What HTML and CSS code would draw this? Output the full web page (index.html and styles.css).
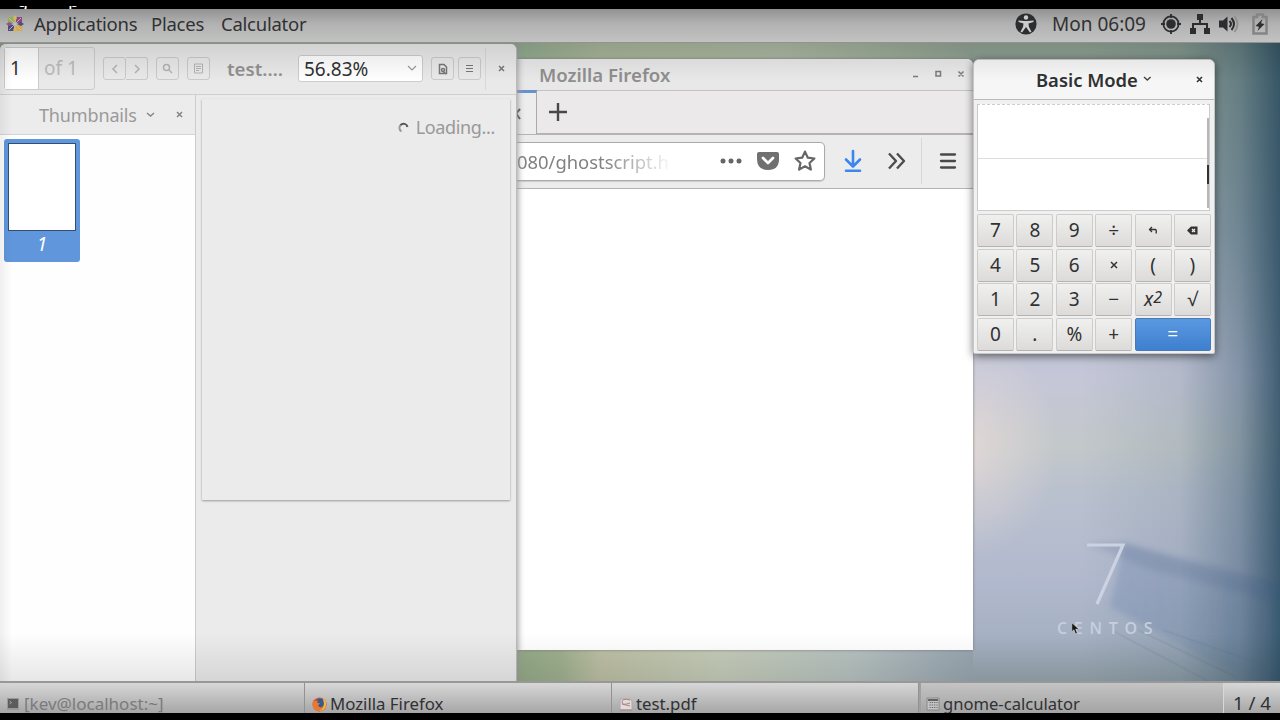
FILE: index.html
```
<!DOCTYPE html>
<html lang="en">
<head>
    <meta charset="utf-8">
    <title>CentOS 7 Desktop</title>
    <link rel="stylesheet" href="styles.css">
</head>
<body>
    <div class="caption"><span>g</span><span>p</span></div>
    <div class="panel">
        <svg class="logo" width="18" height="18" viewBox="0 0 18 18">
            <path d="M2 2h6v6H2z" fill="#94ae58"/><path d="M10 2h6v6h-6z" fill="#8b487f"/>
            <path d="M2 10h6v6H2z" fill="#504a7e"/><path d="M10 10h6v6h-6z" fill="#d4a748"/>
            <path d="M9 0l2 3-2 4-2-4zM9 18l-2-3 2-4 2 4z" fill="#d2b568"/>
            <path d="M0 9l3-2 4 2-4 2z" fill="#925684"/><path d="M18 9l-3 2-4-2 4-2z" fill="#514b80"/>
            <path d="M3 3l12 12M15 3L3 15" stroke="#c9c2c4" stroke-width=".8"/>
        </svg>
        <span class="menu apps">Applications</span>
        <span class="menu places">Places</span>
        <span class="menu calc-menu">Calculator</span>
        <svg class="access" width="22" height="22" viewBox="0 0 22 22">
            <circle cx="11" cy="11" r="10.6" fill="#2c2d2e"/><circle cx="11" cy="4.5" r="2.2" fill="#ccc"/>
            <path d="M3.5 7.4l6 .7h3l6-.7v1.7l-5 1.3.4 3.4 2.6 5-1.6.8L11 14l-3.9 5.6-1.6-.8 2.6-5 .4-3.4-5-1.3z" fill="#ccc"/>
        </svg>
        <span class="menu clock">Mon 06:09</span>
        <div class="tray">
            <svg width="20" height="20" viewBox="0 0 20 20"><g fill="none" stroke="#2c2d2e" stroke-width="1.8"><circle cx="10" cy="10" r="7.6"/><path d="M10 0v4M10 16v4M0 10h4M16 10h4"/></g><circle cx="10" cy="10" r="4.8" fill="#2c2d2e"/></svg>
            <svg width="20" height="20" viewBox="0 0 20 20"><path d="M7 0h6v6H7zM0 14h6v6H0zM14 14h6v6h-6z" fill="#2c2d2e"/><path d="M10 6v4M3 14v-4h14v4" fill="none" stroke="#2c2d2e" stroke-width="2"/></svg>
            <svg width="20" height="20" viewBox="0 0 20 20"><path d="M0 6.5h4l4.5-4v15l-4.5-4H0z" fill="#2c2d2e"/><path d="M10.5 7q3 3 0 6M12.5 4q5 6 0 12" fill="none" stroke="#2c2d2e" stroke-width="2"/><path d="M15.5 2q6 8 0 16" fill="none" stroke="#929292" stroke-width="2"/></svg>
            <svg width="16" height="22" viewBox="0 0 16 22"><path d="M1.5 4H5V1.5h6V4h3.5v16.5h-13z" fill="none" stroke="#858585" stroke-width="2.6"/><path d="M10.5 6l-7 7 3.5.8-1.5 4.2 7-7-3.5-.8z" fill="#2c2d2e"/></svg>
        </div>
    </div>

    <div class="desktop">
        <svg class="wallpaper" width="307" height="638" viewBox="0 0 307 638">
            <defs>
                <linearGradient id="ray" x1="0" x2="1"><stop offset="0" stop-color="#5373a5" stop-opacity=".25"/><stop offset="1" stop-color="#305782" stop-opacity=".06"/></linearGradient>
                <filter id="soft" x="-10%" width="120%" y="-10%" height="120%"><feGaussianBlur stdDeviation="3"/></filter>
            </defs>
            <path d="M151 500L307 546V638H275L137 564z" fill="url(#ray)" filter="url(#soft)"/>
            <path d="M114 501L151 500L315 542V562L178 527z" fill="#344f7a" opacity=".13" filter="url(#soft)"/>
            <path d="M140 588L235 638M165 587L265 635M190 587L285 620" stroke="#4b668a" stroke-width="2" opacity=".1"/>
            <path d="M114 502H150L124 561" fill="none" stroke="#cbd2e2" stroke-width="3.2"/>
        </svg>
        <div class="brand">CENTOS</div>

        <div class="window firefox">
            <div class="ff-title"><b>Mozilla Firefox</b>
                <svg width="56" height="12" viewBox="0 0 56 12" fill="none" stroke="#7b7b7b" stroke-width="1.5"><path d="M1 8.5h5M24 3.5h4.5v4.5H24zM46.5 3.5l5 5m0-5l-5 5"/></svg>
            </div>
            <div class="ff-tabs">
                <div class="ff-tab"><svg width="5" height="14" viewBox="0 0 5 14"><path d="M4 2L0 6.5 4 12" fill="none" stroke="#444" stroke-width="2"/></svg></div>
                <svg width="20" height="20" viewBox="0 0 20 20"><path d="M10 1v18M1 10h18" stroke="#484848" stroke-width="2.4"/></svg>
            </div>
            <div class="ff-tools">
                <div class="ff-url">
                    <span class="url-text">080/ghostscript.h</span>
                    <svg width="22" height="20" viewBox="0 0 22 20" fill="#656565"><circle cx="3" cy="10" r="2.5"/><circle cx="11" cy="10" r="2.5"/><circle cx="19" cy="10" r="2.5"/></svg>
                    <svg class="pocket" width="22" height="20" viewBox="0 0 22 20"><path d="M2 1h18q2 0 2 2v5q0 11-11 11T0 8V3q0-2 2-2z" fill="#707070"/><path d="M6 7l5 5 5-5" fill="none" stroke="#fff" stroke-width="2.7" stroke-linecap="round" stroke-linejoin="round"/></svg>
                    <svg class="star" width="22" height="22" viewBox="0 0 22 22"><path d="M11 1.6l2.8 6.1 6.6.8-4.9 4.5 1.4 6.6L11 16.3l-5.9 3.3 1.4-6.6-4.9-4.5 6.6-.8z" fill="none" stroke="#666" stroke-width="2.2" stroke-linejoin="round"/></svg>
                </div>
                <svg class="download" width="18" height="24" viewBox="0 0 18 24"><path d="M9 2v15M2 10.5l7 7 7-7M2 21.8h14" fill="none" stroke="#3987ef" stroke-width="2.6" stroke-linecap="round" stroke-linejoin="round"/></svg>
                <svg class="more" width="20" height="18" viewBox="0 0 20 18"><path d="M2 1.5L9 9l-7 7.5M10 1.5L17 9l-7 7.5" fill="none" stroke="#4c4c4c" stroke-width="2.4" stroke-linejoin="round"/></svg>
                <span class="divider"></span>
                <svg class="burger" width="18" height="18" viewBox="0 0 18 18"><path d="M2 2.5h14M2 9h14M2 15.5h14" stroke="#484848" stroke-width="2.3" stroke-linecap="round"/></svg>
            </div>
        </div>

        <div class="window evince">
            <div class="ev-head">
                <div class="pager"><span class="page-now">1</span><span class="page-all">of 1</span></div>
                <div class="nav">
                    <span class="tool"><svg width="8" height="10" viewBox="0 0 8 10"><path d="M6 1L2 5l4 4"/></svg></span>
                    <span class="tool"><svg width="8" height="10" viewBox="0 0 8 10"><path d="M2 1l4 4-4 4"/></svg></span>
                </div>
                <span class="tool find"><svg width="11" height="11" viewBox="0 0 11 11"><circle cx="4.5" cy="4.5" r="3"/><path d="M7 7l3 3"/></svg></span>
                <span class="tool note"><svg width="11" height="11" viewBox="0 0 11 11"><path d="M1.5 1h8v9h-8zM3 3.5h5M3 5.5h5M3 7.5h3" stroke-width="1"/></svg></span>
                <b>test.…</b>
                <div class="zoom-box">56.83%<svg width="10" height="7" viewBox="0 0 10 7"><path d="M1 1l4 4 4-4" fill="none" stroke="#999" stroke-width="1.2"/></svg></div>
                <span class="tool dark file"><svg width="10" height="12" viewBox="0 0 10 12"><path d="M1.5 10.5v-9H6L8.5 4v6.5z"/><circle cx="5" cy="7" r="1.5"/><path d="M5 8.5l3 2.5"/></svg></span>
                <span class="tool dark list"><svg width="9" height="9" viewBox="0 0 9 9"><path d="M1 1.5h7M1 4.5h7M1 7.5h7" stroke-width="1.2"/></svg></span>
                <span class="ev-close"><svg width="7" height="7" viewBox="0 0 7 7"><path d="M1 1l5 5m0-5L1 6" stroke="#777" stroke-width="1.5"/></svg></span>
            </div>
            <div class="ev-main">
                <div class="side">
                    <div class="side-head"><span>Thumbnails</span><svg class="down" width="9" height="6" viewBox="0 0 9 6"><path d="M1 1l3.5 3L8 1" fill="none" stroke="#858585" stroke-width="1.4"/></svg><svg width="7" height="7" viewBox="0 0 7 7"><path d="M1 1l5 5m0-5L1 6" stroke="#858585" stroke-width="1.5"/></svg></div>
                    <div class="thumb"><div class="paper"></div><i>1</i></div>
                </div>
                <div class="document">
                    <div class="page"><svg width="11" height="11" viewBox="0 0 11 11" fill="none" stroke-width="2"><path d="M3.5 9.3A4 4 0 0 1 3 2.6" stroke="#999"/><path d="M2.6 3A4 4 0 0 1 9.5 5" stroke="#555"/></svg><span>Loading...</span></div>
                </div>
            </div>
        </div>

        <div class="window calculator">
            <div class="calc-head"><b>Basic Mode</b><svg class="down" width="9" height="6" viewBox="0 0 9 6"><path d="M1 1l3.3 3L7.6 1" fill="none" stroke="#444" stroke-width="1.4"/></svg><svg width="7" height="7" viewBox="0 0 7 7"><path d="M1 1l5 5m0-5L1 6" stroke="#333" stroke-width="1.6"/></svg></div>
            <div class="display"><div class="history"></div><span class="scroll"></span><span class="caret"></span></div>
            <div class="keys">
                <span>7</span><span>8</span><span>9</span><span>÷</span>
                <span><svg width="10" height="9" viewBox="0 0 10 9"><path d="M4 1L1.5 3.5 4 6M2 3.5h5q2 0 1 4" fill="none" stroke="#333" stroke-width="1.3"/></svg></span>
                <span><svg width="11" height="9" viewBox="0 0 11 9"><path d="M0 4.5L4 .5h6.5v8H4z" fill="#333"/><path d="M5 3l3 3m0-3L5 6" stroke="#eee" stroke-width="1.3"/></svg></span>
                <span>4</span><span>5</span><span>6</span><span><svg width="8" height="8" viewBox="0 0 8 8"><path d="M1 1l6 6m0-6L1 7" stroke="#333" stroke-width="1.5"/></svg></span><span>(</span><span>)</span>
                <span>1</span><span>2</span><span>3</span><span>−</span><span class="power"><i>x</i><i class="two">2</i></span><span>√</span>
                <span>0</span><span>.</span><span>%</span><span>+</span><span class="equals">=</span>
            </div>
        </div>
        <div class="shade"></div>
        <svg class="cursor" width="9" height="13" viewBox="0 0 9 13"><path d="M.8.8v9l2.1-2L4.6 12l1.8-.8-1.7-4H8z" fill="#151515" stroke="#d7d7d7" stroke-width=".6"/></svg>
    </div>

    <div class="taskbar">
        <div class="task minimized"><svg width="12" height="12" viewBox="0 0 12 12"><path d="M0 0h12v12H0z" fill="#999"/><path d="M1 1h10v9H1z" fill="#5c5c5c"/><path d="M2.5 3l2 1.5-2 1.5" fill="none" stroke="#aaa"/></svg><span>[kev@localhost:~]</span></div>
        <div class="task fox"><svg width="15" height="15" viewBox="0 0 15 15"><circle cx="7.5" cy="7.5" r="7" fill="#df592e"/><circle cx="8" cy="6" r="4.6" fill="#315d90"/><path d="M1 3l2 1 3-.5-1 2 3 1-2 2 2 2q4 0 4-5l-1-4q4 2 3.5 7T8 14Q1 14 .7 8z" fill="#e87933"/><path d="M11 1q5 4 2 10-2 3-6 3 5-2 5-7z" fill="#e7bd48"/></svg><span>Mozilla Firefox</span></div>
        <div class="task pdf"><svg width="14" height="14" viewBox="0 0 14 14"><path d="M1 2h10l2 2v9H1z" fill="#ddd" stroke="#aaa"/><path d="M11 3Q3 1 3 5t8 1M3 7l8 2M1 13h12" fill="none" stroke="#b87e78"/></svg><span>test.pdf</span></div>
        <div class="task current"><svg width="14" height="14" viewBox="0 0 14 14"><path d="M1 1h12v12H1z" fill="#c4c4c4" stroke="#888"/><path d="M2 3h10" stroke="#444" stroke-width="1.5"/><path d="M3.5 5.5h8M3.5 8h8M3.5 10.5h8" stroke="#666" stroke-dasharray="1.3 1"/></svg><span>gnome-calculator</span></div>
        <div class="workspace">1 / 4</div>
    </div>
    <div class="bottom"></div>
</body>
</html>
```
FILE: styles.css
```
* {
    box-sizing: border-box;
}
body {
    margin: 0;
    width: 1280px;
    height: 720px;
    overflow: hidden;
    display: flex;
    flex-direction: column;
    background: #000;
    color: #303132;
    font-family: "Noto Sans", "Open Sans", sans-serif;
    font-size: 18px;
    white-space: nowrap;
}
svg {
    flex: none;
    display: block;
}
.caption {
    height: 9px;
    padding-left: 17px;
    display: flex;
    gap: 40px;
    align-items: flex-end;
    overflow: hidden;
    border-top: 6px solid #000;
    color: #fff;
    font-size: 18px;
    line-height: 17px;
}

/* top panel */
.panel {
    height: 34px;
    display: flex;
    align-items: center;
    padding: 0 12px 3px 6px;
    background: linear-gradient(#929292, #b2b2b2 45%, #c2c2c2);
    border-bottom: 1px solid #929292;
}
.menu {
    font-size: 18.5px;
    line-height: 28px;
    letter-spacing: -.25px;
}
.apps {
    width: 117px;
    margin-left: 10px;
}
.places {
    width: 70px;
}
.access {
    margin-left: auto;
}
.clock {
    width: 94px;
    margin-left: 15px;
    font-size: 19px;
    letter-spacing: 0;
}
.tray {
    display: flex;
    align-items: center;
    gap: 9px;
    margin-left: 15px;
}
.tray svg:last-child {
    margin-left: 4px;
}

.desktop {
    position: relative;
    flex: 1;
    overflow: hidden;
    background:
        linear-gradient(90deg, #8fa88d 517px, #a5b296 600px, #a8b59f 780px, #98a894 900px, #8c9e90 973px) 0 0 / 973px 60px no-repeat,
        linear-gradient(90deg, #93aa87 517px, #9fb08f 560px, #bdc0a4 600px, #c5ccb9 720px, #b7c2c0 850px, #a0adb5 940px, #98a6b0 973px) 0 100% / 973px 60px no-repeat,
        linear-gradient(90deg, transparent 1080px, rgba(50, 85, 105, .12) 1180px, rgba(40, 75, 100, .42) 1240px, rgba(32, 67, 90, .8)),
        radial-gradient(ellipse 90px 110px at 968px 405px, rgba(236, 222, 219, .7), transparent),
        linear-gradient(#8c9e90, #a3b0b5 30%, #c5c7d8 52%, #c3c8ca 63%, #bac1ce 70%, #b2b9ce 84%, #a6b1c3 93%, #96a5ae);
}
.wallpaper {
    position: absolute;
    right: 0;
    top: 0;
}
.brand {
    position: absolute;
    left: 1057px;
    top: 574px;
    font: 600 16px/22px "Open Sans", sans-serif;
    letter-spacing: 6.7px;
    color: #c6cfde;
}
.window {
    position: absolute;
}

/* browser */
.firefox {
    left: 516px;
    top: 16px;
    width: 457px;
    height: 591px;
    background: #fff;
    border-radius: 0 6px 0 0;
    overflow: hidden;
    box-shadow: 0 0 3px #777;
}
.ff-title {
    height: 32px;
    display: flex;
    align-items: center;
    justify-content: space-between;
    padding: 0 5px 1px 23px;
    background: #e9e8e8;
    border-bottom: 1px solid #c4c3c3;
    color: #8f8f8f;
}
.ff-title b {
    font-size: 18.6px;
    font-weight: 600;
}
.ff-tabs {
    height: 44px;
    display: flex;
    align-items: center;
    gap: 11px;
    background: #ebe9e9;
    border-bottom: 2px solid #b6b3b4;
}
.ff-tab {
    width: 21px;
    height: 44px;
    display: flex;
    align-items: center;
    background: #eeeded;
    border-top: 3px solid #6992cd;
    border-right: 1px solid #aaa;
}
.ff-tools {
    height: 54px;
    display: flex;
    align-items: center;
    padding-bottom: 1px;
    background: #edecec;
    border-bottom: 1px solid #b5b4b4;
}
.ff-url {
    width: 309px;
    height: 39px;
    display: flex;
    align-items: center;
    background: #fff;
    border: 1px solid #aaa;
    border-left: 0;
    border-radius: 0 5px 5px 0;
    box-shadow: 0 1px 1px #ccc;
}
.url-text {
    width: 204px;
    padding-left: 1px;
    font-size: 18.4px;
    color: #818181;
    -webkit-mask-image: linear-gradient(90deg, #000 88px, transparent 158px);
    mask-image: linear-gradient(90deg, #000 88px, transparent 158px);
}
.pocket {
    margin-left: 15px;
}
.star {
    margin-left: 15px;
}
.download {
    margin-left: 19px;
}
.more {
    margin-left: 25px;
}
.divider {
    width: 1px;
    height: 46px;
    margin-left: 14px;
    background: #d9d8d8;
}
.burger {
    margin-left: 17px;
}

/* document viewer */
.evince {
    left: 0;
    top: 1px;
    width: 517px;
    height: 638px;
    background: #ebebeb;
    border-right: 1px solid #bbb;
    border-radius: 6px 6px 0 0;
    overflow: hidden;
    box-shadow: 1px 0 6px #999;
}
.ev-head {
    height: 51px;
    display: flex;
    align-items: center;
    padding: 0 0 1px 4px;
    background: #eae9e9;
    border-bottom: 1px solid #d0cfcf;
}
.pager {
    display: flex;
    width: 91px;
    height: 43px;
    border: 1px solid #ccc;
    border-radius: 3px;
    font-size: 19px;
    line-height: 40px;
}
.page-now {
    width: 34px;
    padding-left: 5px;
    border-right: 1px solid #ccc;
    background: #fff;
}
.page-all {
    padding-left: 5px;
    color: #bbb;
}
.nav {
    display: flex;
    margin-left: 8px;
}
.tool {
    width: 23px;
    height: 23px;
    display: flex;
    align-items: center;
    justify-content: center;
    border: 1px solid #cbcaca;
    border-radius: 3px;
    fill: none;
    stroke: #b3b3b3;
    stroke-width: 1.5;
}
.nav .tool + .tool {
    border-left: 0;
    border-radius: 0 3px 3px 0;
    width: 22px;
}
.find {
    margin-left: 8px;
}
.note {
    margin-left: 8px;
}
.ev-head b {
    width: 88px;
    padding-left: 17px;
    font-size: 18.7px;
    font-weight: 600;
    color: #929292;
}
.zoom-box {
    width: 125px;
    height: 27px;
    display: flex;
    align-items: center;
    justify-content: space-between;
    padding: 0 5px;
    background: #fff;
    border: 1px solid #ccc;
    border-radius: 3px;
    font-size: 19px;
}
.dark {
    stroke: #777;
    margin-left: 8px;
}
.list {
    margin-left: 4px;
}
.ev-close {
    height: 42px;
    display: flex;
    align-items: center;
    margin-left: 4px;
    padding-left: 12px;
    border-left: 1px solid #d8d8d8;
}
.ev-main {
    display: flex;
    height: 587px;
}
.side {
    width: 196px;
    background: #fefefe;
    border-right: 1px solid #cdcccc;
}
.side-head {
    height: 40px;
    display: flex;
    align-items: center;
    padding-left: 39px;
    background: #edecec;
    border-bottom: 1px solid #d6d5d5;
    color: #9a9a9a;
    letter-spacing: -.15px;
}
.side-head .down {
    margin: 0 21px 0 9px;
}
.thumb {
    width: 76px;
    height: 123px;
    margin: 4px 0 0 4px;
    padding: 4px;
    display: flex;
    flex-direction: column;
    background: #6096dc;
    border-radius: 3px;
    color: #fff;
    text-align: center;
    font-size: 19px;
    line-height: 26px;
}
.paper {
    height: 88px;
    background: #fff;
    border: 1px solid #344d72;
}
.document {
    flex: 1;
    padding: 4px 6px 0 6px;
}
.page {
    height: 401px;
    display: flex;
    justify-content: flex-end;
    align-items: flex-start;
    gap: 7px;
    padding: 16px 15px 0 0;
    color: #999;
    letter-spacing: -.35px;
    box-shadow: 0 1px 2px #999;
}
.page svg {
    margin-top: 7px;
}

/* calculator */
.calculator {
    left: 973px;
    top: 16px;
    width: 242px;
    height: 295px;
    background: #f0f0f0;
    border: 1px solid #c7c7c7;
    border-radius: 6px 6px 2px 2px;
    box-shadow: 0 2px 9px rgba(0, 0, 0, .55);
}
.calc-head {
    height: 40px;
    display: flex;
    align-items: center;
    padding: 0 0 1px 62px;
    background: #f6f6f7;
    border-bottom: 1px solid #b8b8b8;
    border-radius: 5px 5px 0 0;
}
.calc-head b {
    font-size: 18.4px;
    font-weight: 600;
}
.calc-head .down {
    margin: 0 44px 0 5px;
}
.display {
    position: relative;
    height: 107px;
    margin: 4px 4px 0 3px;
    background: #fff;
    border: 1px solid #ccc;
    border-top-style: dashed;
}
.history {
    height: 54px;
    border-bottom: 1px solid #ddd;
}
.scroll {
    position: absolute;
    right: 0;
    top: 13px;
    width: 2px;
    height: 90px;
    background: #b7b7b7;
}
.caret {
    position: absolute;
    right: 0;
    top: 60px;
    width: 2px;
    height: 19px;
    background: #333;
}
.keys {
    display: grid;
    grid-template-columns: repeat(6, 37px);
    grid-auto-rows: 33px;
    column-gap: 2.4px;
    row-gap: 1.7px;
    margin: 3px 0 0 3px;
    font-size: 19px;
}
.keys > span {
    display: flex;
    align-items: center;
    justify-content: center;
    padding-bottom: 1px;
    background: linear-gradient(#f0f0ef, #dcdbda);
    border: 1px solid #cdcccb;
    border-bottom-color: #b4b3b2;
    border-radius: 2px;
}
.keys .equals {
    grid-column: span 2;
    color: #fff;
    background: linear-gradient(#5a99e1, #3e7fcf);
    border-color: #467ab9;
}
.two {
    font-size: 16px;
    margin-bottom: 4px;
}
.shade {
    position: absolute;
    inset: 0;
    background:
        linear-gradient(rgba(0, 0, 0, .1), transparent 38px, transparent 590px, rgba(0, 0, 0, .09)),
        linear-gradient(90deg, rgba(0, 0, 0, .06), transparent 12px);
}
.cursor {
    position: absolute;
    left: 1071px;
    top: 579px;
}

/* task list */
.taskbar {
    height: 32px;
    display: flex;
    background: linear-gradient(#d7d7d8, #a6a6a7);
    border-top: 2px solid #989898;
}
.task {
    display: flex;
    align-items: center;
    width: 307px;
    height: 30px;
    padding: 12px 0 0 7px;
    gap: 3px;
    overflow: hidden;
    border-right: 1px solid #929292;
    font-size: 16.8px;
    line-height: 18px;
}
.minimized {
    width: 305px;
    gap: 5px;
    color: #7b7b7c;
    font-size: 17px;
}
.current {
    flex: 1;
    padding-left: 5px;
    border-left: 2px solid #a0a0a0;
    border-right-color: #d8d8d8;
    background: linear-gradient(#c5c4c5, #a4a4a5);
    font-size: 16.6px;
}
.workspace {
    width: 56px;
    padding: 7px 0 0 9px;
    font-size: 18.7px;
    line-height: 25px;
}
.bottom {
    height: 7px;
}
```
